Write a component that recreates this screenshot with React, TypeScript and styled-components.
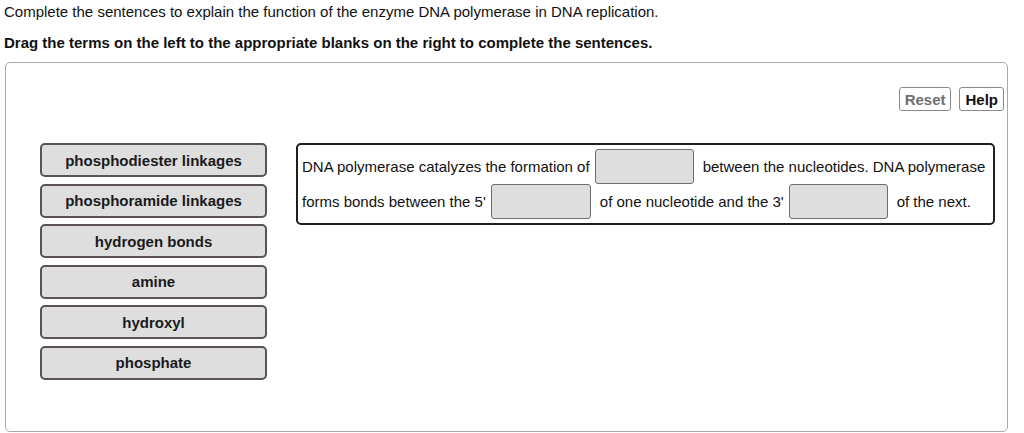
import React from 'react';
import styled, { createGlobalStyle } from 'styled-components';

const GlobalStyle = createGlobalStyle`
  body {
    margin: 0;
    padding: 0;
    background: #ffffff;
    font-family: "Liberation Sans", Arial, Helvetica, sans-serif;
    color: #111;
  }
`;

const Page = styled.div`
  padding: 3px 4px 0 4px;
  width: 1024px;
  box-sizing: border-box;
`;

const Intro = styled.p`
  margin: 0;
  font-size: 15px;
  line-height: 17px;
`;

const Instructions = styled.p`
  margin: 14px 0 0 0;
  font-size: 15px;
  line-height: 17px;
  font-weight: bold;
`;

const Panel = styled.div`
  margin: 11px 0 0 1px;
  width: 1003px;
  height: 370px;
  box-sizing: border-box;
  border: 1px solid #a9a9a9;
  border-radius: 5px;
  padding: 24px 3px 0 34px;
`;

const Toolbar = styled.div`
  display: flex;
  justify-content: flex-end;
  gap: 8px;
`;

const ToolButton = styled.button<{ $muted?: boolean }>`
  height: 24px;
  padding: 0 5px;
  box-sizing: border-box;
  background: #fff;
  border: 1.5px solid #8a8a8a;
  border-radius: 3px;
  font-family: inherit;
  font-size: 15px;
  font-weight: bold;
  color: ${p => (p.$muted ? '#6f6f6f' : '#111')};
`;

const Workspace = styled.div`
  display: flex;
  align-items: flex-start;
  gap: 29px;
  margin-top: 32px;
`;

const Terms = styled.div`
  display: flex;
  flex-direction: column;
  gap: 6.6px;
  width: 227px;
`;

const Term = styled.div`
  height: 34px;
  box-sizing: border-box;
  border: 2px solid #5b5252;
  border-radius: 5px;
  background: #dedede;
  display: flex;
  align-items: center;
  justify-content: center;
  font-size: 15px;
  font-weight: bold;
  color: #1a1a1a;
`;

const Sentences = styled.div`
  width: 699px;
  height: 82px;
  box-sizing: border-box;
  border: 2px solid #1f1f1f;
  border-radius: 5px;
  padding: 4px;
  display: flex;
  flex-direction: column;
  gap: 1px;
`;

const Line = styled.div`
  display: flex;
  align-items: center;
  height: 34px;
  font-size: 15px;
  color: #111;
  white-space: nowrap;
`;

const Blank = styled.span<{ $w: number }>`
  display: inline-block;
  width: ${p => p.$w}px;
  height: 35px;
  box-sizing: border-box;
  margin: 0 9px 0 5px;
  background: #dedede;
  border: 1px solid #6e6e6e;
  border-radius: 3px;
`;

const terms = [
  'phosphodiester linkages',
  'phosphoramide linkages',
  'hydrogen bonds',
  'amine',
  'hydroxyl',
  'phosphate',
];

export default function App() {
  return (
    <Page>
      <GlobalStyle />
      <Intro>
        Complete the sentences to explain the function of the enzyme DNA polymerase in DNA replication.
      </Intro>
      <Instructions>
        Drag the terms on the left to the appropriate blanks on the right to complete the sentences.
      </Instructions>
      <Panel>
        <Toolbar>
          <ToolButton $muted>Reset</ToolButton>
          <ToolButton>Help</ToolButton>
        </Toolbar>
        <Workspace>
          <Terms>
            {terms.map(t => (
              <Term key={t}>{t}</Term>
            ))}
          </Terms>
          <Sentences>
            <Line>
              DNA polymerase catalyzes the formation of
              <Blank $w={99} />
              between the nucleotides. DNA polymerase
            </Line>
            <Line>
              forms bonds between the 5'
              <Blank $w={100} />
              of one nucleotide and the 3'
              <Blank $w={99} />
              of the next.
            </Line>
          </Sentences>
        </Workspace>
      </Panel>
    </Page>
  );
}
